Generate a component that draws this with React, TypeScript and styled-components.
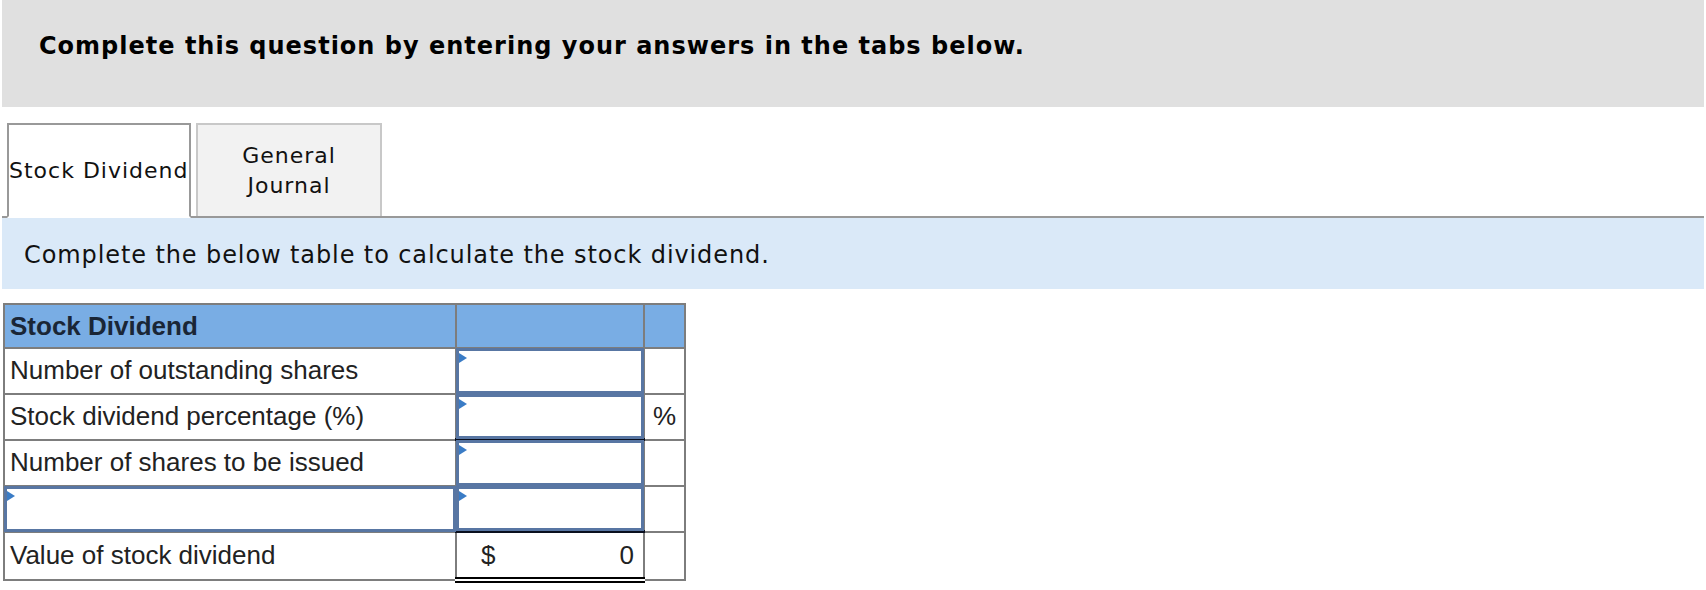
import { createGlobalStyle, styled } from "styled-components";

const GlobalStyle = createGlobalStyle`
  body {
    margin: 0;
    background: #ffffff;
  }
`;

const Page = styled.div`
  padding: 0 2px;
  font-family: "DejaVu Sans", Verdana, sans-serif;
  color: #111;
`;

const Banner = styled.div`
  height: 107px;
  box-sizing: border-box;
  padding: 31px 0 0 37px;
  background: #e0e0e0;
`;

const Title = styled.h1`
  margin: 0;
  font-size: 24px;
  line-height: 30px;
  font-weight: bold;
  letter-spacing: 1px;
  color: #000;
`;

const TabBar = styled.div`
  display: flex;
  align-items: flex-end;
  margin-top: 16px;
  padding-left: 5px;
  border-bottom: 2px solid #999;
`;

const Tab = styled.div<{ $active?: boolean }>`
  display: flex;
  align-items: center;
  box-sizing: border-box;
  text-align: center;
  font-size: 22px;
  line-height: 30px;
  letter-spacing: 1px;
  color: #111;
  width: ${(p) => (p.$active ? "184px" : "186px")};
  height: ${(p) => (p.$active ? "95px" : "93px")};
  margin-left: ${(p) => (p.$active ? "0" : "5px")};
  margin-bottom: ${(p) => (p.$active ? "-2px" : "0")};
  background: ${(p) => (p.$active ? "#ffffff" : "#f2f2f2")};
  border: 2px solid ${(p) => (p.$active ? "#999" : "#c8c8c8")};
  border-bottom: ${(p) => (p.$active ? "2px solid #ffffff" : "0")};
  justify-content: ${(p) => (p.$active ? "flex-start" : "center")};
`;

const InfoBand = styled.div`
  height: 71px;
  box-sizing: border-box;
  padding: 22px 0 0 22px;
  background: #dae9f8;
  font-size: 24px;
  line-height: 30px;
  letter-spacing: 0.9px;
  color: #111;
`;

const Table = styled.table`
  margin: 14px 0 0 1px;
  width: 681px;
  table-layout: fixed;
  border-collapse: collapse;
  font-family: "Liberation Sans", Arial, sans-serif;
  font-size: 26px;
  color: #222;
`;

const HeadCell = styled.th`
  height: 42px;
  padding: 0 0 0 5px;
  text-align: left;
  font-weight: bold;
  color: #1a2636;
  background: #79ade4;
  border: 2px solid #7d7d7d;
`;

const Cell = styled.td<{ $rule?: "top" | "total"; $align?: string }>`
  height: 43.6px;
  padding: 0 0 0 5px;
  text-align: ${(p) => p.$align || "left"};
  border: 2px solid #7d7d7d;
  border-top: ${(p) => (p.$rule ? "3px solid #0a0f1e" : "2px solid #7d7d7d")};
  border-bottom: ${(p) => (p.$rule === "total" ? "6px double #000" : "2px solid #7d7d7d")};
`;

const FieldCell = styled.td<{ $rule?: boolean }>`
  height: 43.6px;
  padding: 0;
  border: 2px solid #7d7d7d;
  border-top: ${(p) => (p.$rule ? "3px solid #0a0f1e" : "2px solid #7d7d7d")};
`;

const Field = styled.div`
  position: relative;
  box-sizing: border-box;
  height: 45.6px;
  margin: -1px;
  border: 3px solid #5876a3;
  background: #fff;

  &::before {
    content: "";
    position: absolute;
    left: 0;
    top: 2px;
    border-top: 5px solid transparent;
    border-bottom: 5px solid transparent;
    border-left: 8px solid #3a7cc6;
  }
`;

const Amount = styled.div`
  display: flex;
  justify-content: space-between;
  padding: 0 9px 0 24px;
`;

const rows = [
  { label: "Number of outstanding shares", unit: "" },
  { label: "Stock dividend percentage (%)", unit: "%" },
  { label: "Number of shares to be issued", unit: "", rule: true },
];

export default function App() {
  return (
    <Page>
      <GlobalStyle />
      <Banner>
        <Title>Complete this question by entering your answers in the tabs below.</Title>
      </Banner>
      <TabBar>
        <Tab $active>Stock Dividend</Tab>
        <Tab>
          General
          <br />
          Journal
        </Tab>
      </TabBar>
      <InfoBand>Complete the below table to calculate the stock dividend.</InfoBand>
      <Table>
        <colgroup>
          <col style={{ width: 452 }} />
          <col style={{ width: 188 }} />
          <col style={{ width: 41 }} />
        </colgroup>
        <thead>
          <tr>
            <HeadCell>Stock Dividend</HeadCell>
            <HeadCell />
            <HeadCell />
          </tr>
        </thead>
        <tbody>
          {rows.map((r) => (
            <tr key={r.label}>
              <Cell>{r.label}</Cell>
              <FieldCell $rule={r.rule}>
                <Field />
              </FieldCell>
              <Cell $align="center" style={{ padding: 0 }}>
                {r.unit}
              </Cell>
            </tr>
          ))}
          <tr>
            <FieldCell>
              <Field />
            </FieldCell>
            <FieldCell>
              <Field />
            </FieldCell>
            <Cell />
          </tr>
          <tr>
            <Cell>Value of stock dividend</Cell>
            <Cell $rule="total" style={{ padding: 0 }}>
              <Amount>
                <span>$</span>
                <span>0</span>
              </Amount>
            </Cell>
            <Cell />
          </tr>
        </tbody>
      </Table>
    </Page>
  );
}
